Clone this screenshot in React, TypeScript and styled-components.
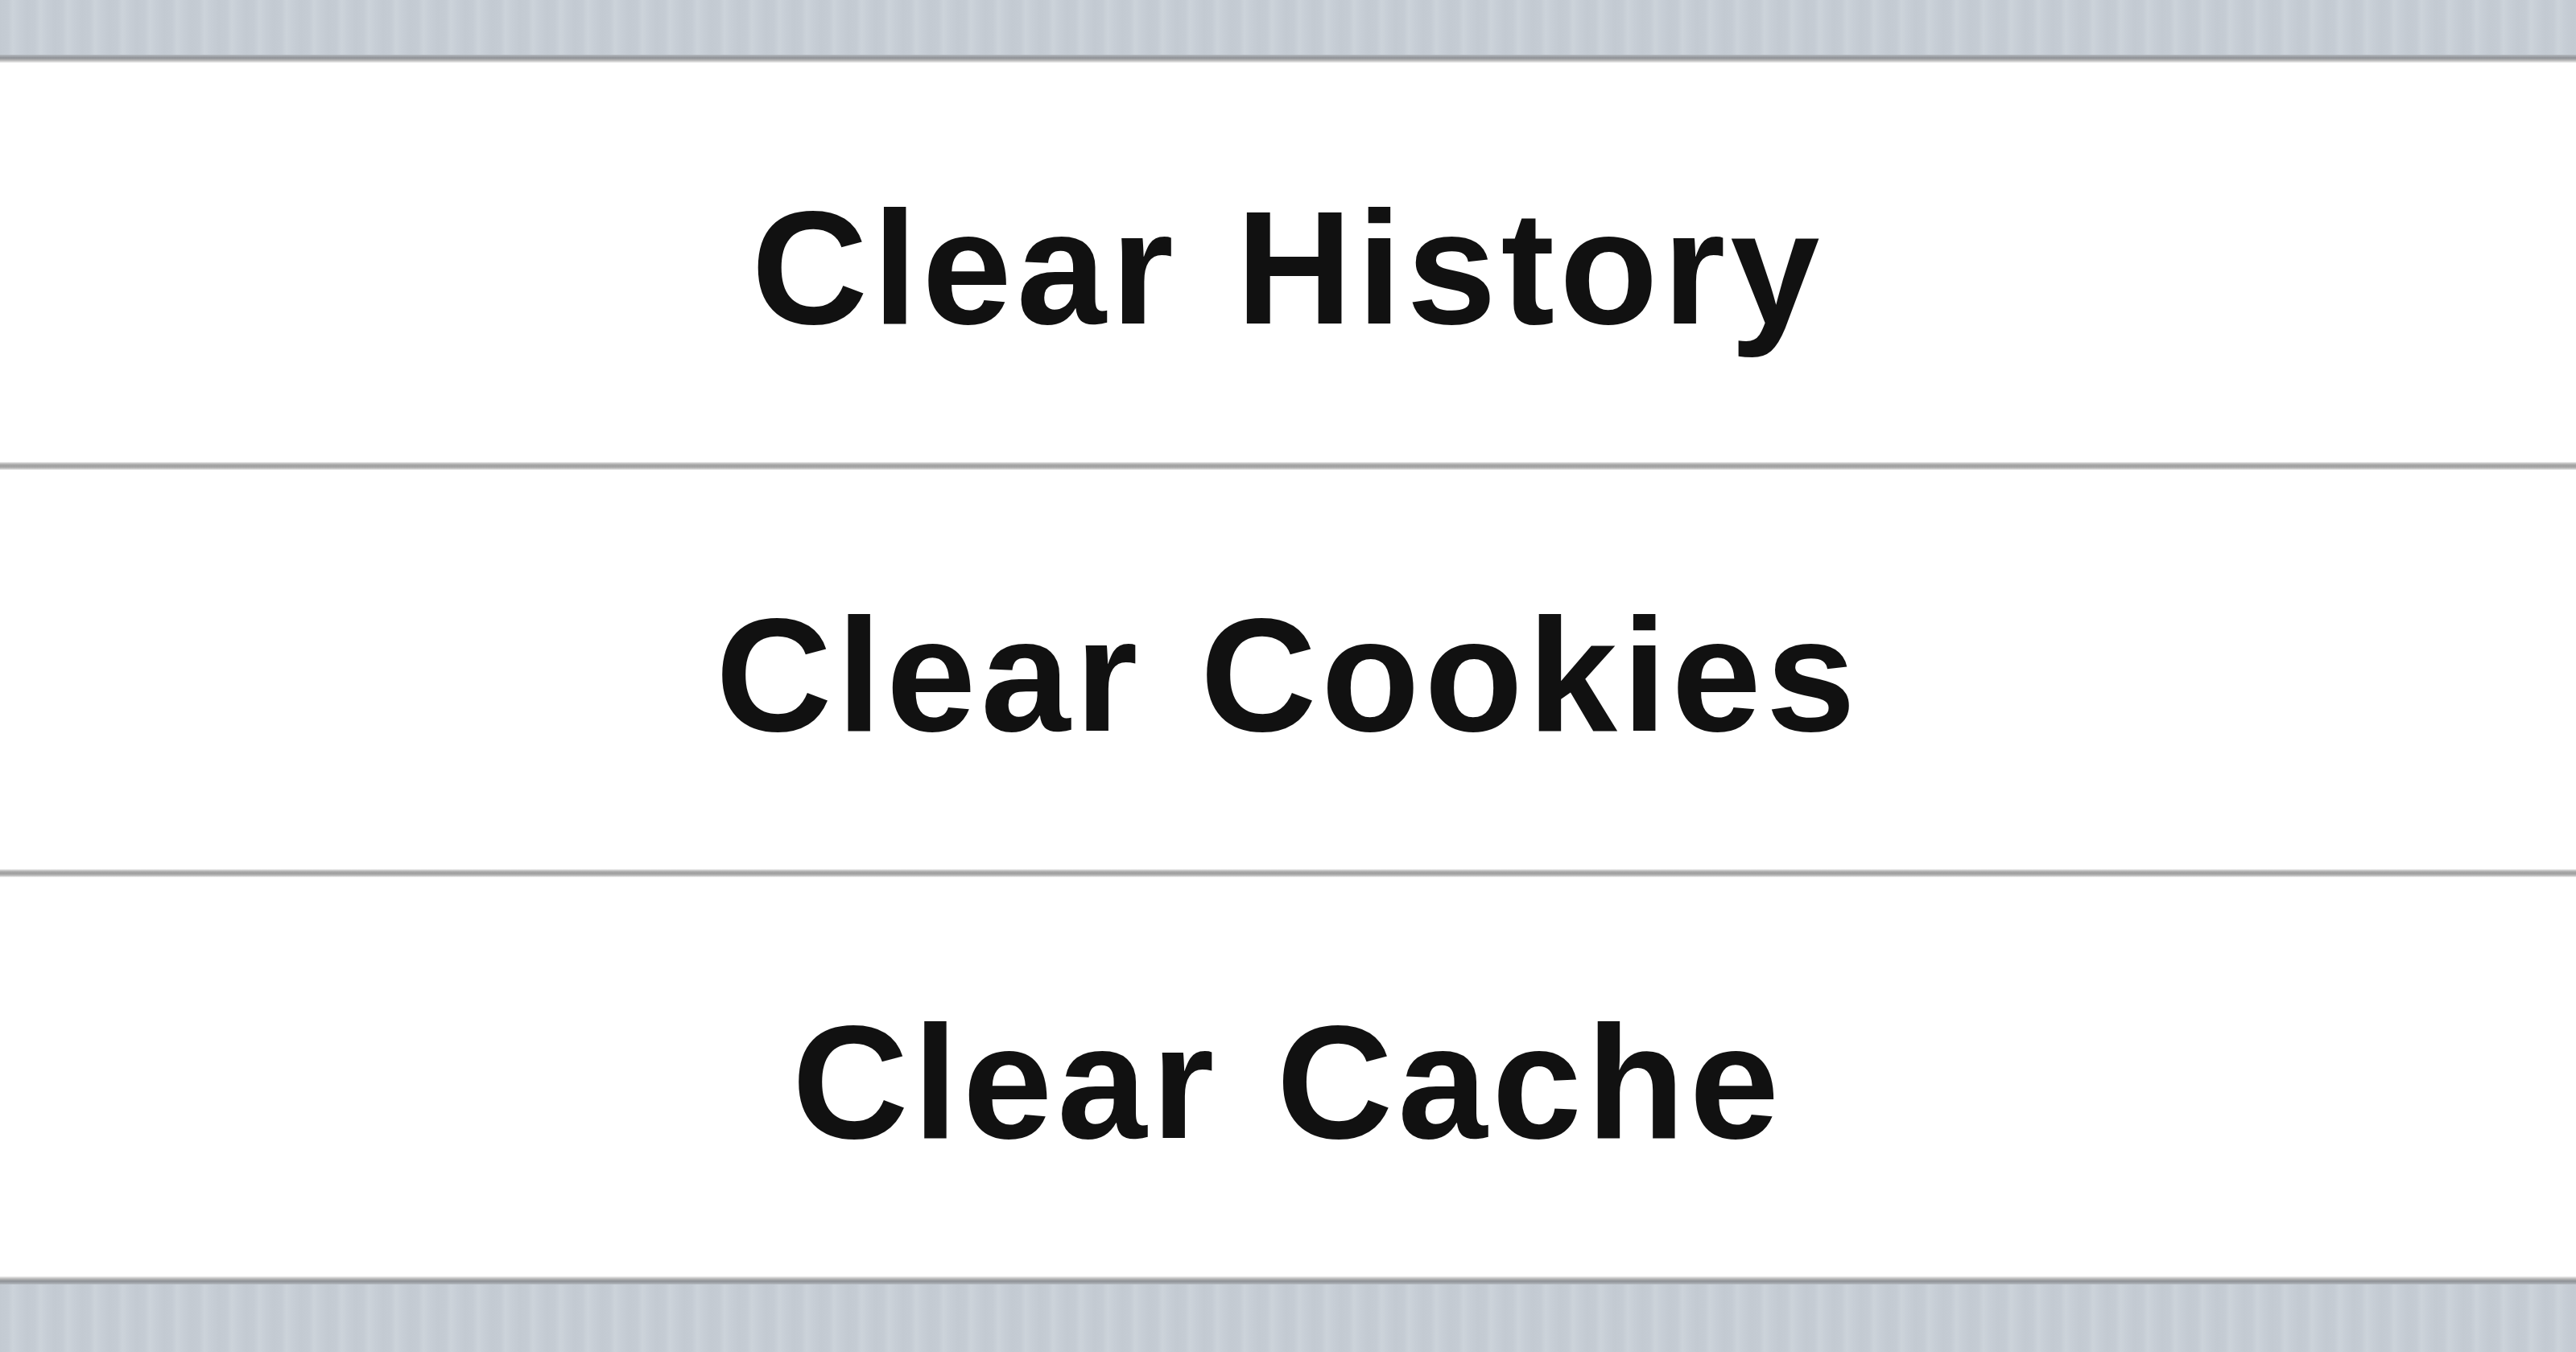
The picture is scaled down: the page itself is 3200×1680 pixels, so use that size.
import styled, { createGlobalStyle } from "styled-components";

const GlobalStyle = createGlobalStyle`
  html, body {
    margin: 0;
    padding: 0;
    background: #ffffff;
  }
  #root {
    width: 100%;
    height: 100vh;
  }
`;

const actions = ["Clear History", "Clear Cookies", "Clear Cache"];

export default function App() {
  return (
    <>
      <GlobalStyle />
      <Screen>
        <Pinstripe height={68} />
        <Edge side="top" />
        <Group>
          {actions.map((label, i) => (
            <ActionItem key={label}>
              <ActionRow>
                <ActionLabel>{label}</ActionLabel>
              </ActionRow>
              {i < actions.length - 1 && <Divider />}
            </ActionItem>
          ))}
        </Group>
        <Edge side="bottom" />
        <Pinstripe height={84} />
      </Screen>
    </>
  );
}

const Screen = styled.div`
  display: flex;
  flex-direction: column;
  width: 100%;
  height: 1680px;
  overflow: hidden;
  background: #ffffff;
`;

const Pinstripe = styled.div<{ height: number }>`
  flex: 0 0 ${(p) => p.height}px;
  background-color: #c6cdd5;
  background-image: repeating-linear-gradient(
    90deg,
    #c3cad2 0px,
    #c5ccd4 10px,
    #ccd3da 16px,
    #c7ced6 24px,
    #c3cad2 34px
  );
`;

const Edge = styled.div<{ side: "top" | "bottom" }>`
  flex: 0 0 10px;
  background: ${(p) =>
    p.side === "top"
      ? "linear-gradient(180deg, #b4b9bf 0%, #8e9196 40%, #b8b8b8 70%, #f4f4f4 100%)"
      : "linear-gradient(180deg, #f4f4f4 0%, #b8b8b8 30%, #8e9196 60%, #b4b9bf 100%)"};
`;

const Group = styled.div`
  display: flex;
  flex-direction: column;
  flex: 0 0 auto;
`;

const ActionItem = styled.div`
  display: flex;
  flex-direction: column;
`;

const ActionRow = styled.button`
  display: flex;
  align-items: center;
  justify-content: center;
  height: 496px;
  padding: 14px 0 0 0;
  margin: 0;
  border: none;
  background: #ffffff;
  cursor: pointer;
`;

const ActionLabel = styled.span`
  font-family: "Liberation Sans", Arial, Helvetica, sans-serif;
  font-weight: 700;
  font-size: 200px;
  line-height: 1;
  letter-spacing: 6px;
  word-spacing: 10px;
  color: #111111;
`;

const Divider = styled.div`
  flex: 0 0 10px;
  background: linear-gradient(
    180deg,
    #f2f2f2 0%,
    #b5b5b5 25%,
    #9d9d9d 50%,
    #b5b5b5 75%,
    #f2f2f2 100%
  );
`;
